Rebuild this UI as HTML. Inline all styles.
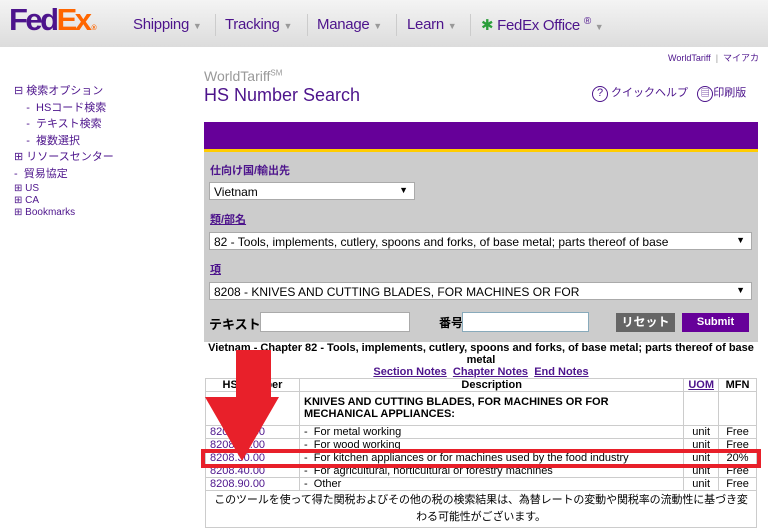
<!DOCTYPE html><html><head><meta charset="utf-8"><style>
*{margin:0;padding:0;box-sizing:border-box}
body{width:768px;height:532px;overflow:hidden;background:#fff;font-family:"Liberation Sans","Noto Sans CJK JP",sans-serif;position:relative;font-size:11px}
.a{position:absolute}
.nav{top:0;left:0;width:768px;height:47px;background:linear-gradient(#f4f4f4,#dcdcdc)}
.ni{top:16px;font-size:15px;color:#4d148c;letter-spacing:-0.3px}
.sep{top:14px;width:1px;height:22px;background:#ccc}
.car{color:#999;font-size:9px}
.lm{color:#4d148c;font-size:11px}
.sel{background:#fff;border:1px solid #aaa;height:18px;font-size:12px;padding:2px 4px;color:#000}
.sel:after{content:"▼";position:absolute;right:6px;top:2px;font-size:9px}
.lbl{color:#4d148c;font-weight:bold;font-size:11px}
table{border-collapse:collapse;font-size:11px}
td{border:1px solid #ccc;padding:0 4px;height:13px;line-height:12px}
.lk{color:#4d148c}
</style></head><body>
<div class="a nav"></div>
<div class="a" style="left:9px;top:2px;font-size:31px;font-weight:bold;letter-spacing:-2.5px;color:#4d148c">Fed<span style="color:#ff6600">Ex</span><span style="font-size:7px;color:#ff6600;letter-spacing:0"> ®</span></div>
<div class="a ni" style="left:133px">Shipping <span class="car">▼</span></div>
<div class="a sep" style="left:215px"></div>
<div class="a ni" style="left:225px">Tracking <span class="car">▼</span></div>
<div class="a sep" style="left:307px"></div>
<div class="a ni" style="left:317px">Manage <span class="car">▼</span></div>
<div class="a sep" style="left:396px"></div>
<div class="a ni" style="left:407px">Learn <span class="car">▼</span></div>
<div class="a sep" style="left:470px"></div>
<div class="a ni" style="left:481px"><span style="color:#2a9d3a">✱</span> FedEx Office <sup style="font-size:10px">®</sup> <span class="car">▼</span></div>
<div class="a" style="left:668px;top:51px;font-size:9px;color:#4d148c">WorldTariff &nbsp;<span style="color:#999">|</span>&nbsp; マイアカ</div>
<div class="a" style="left:204px;top:68px;font-size:14px;color:#999">WorldTariff<sup style="font-size:8px">SM</sup></div>
<div class="a" style="left:204px;top:85px;font-size:18px;color:#4d148c">HS Number Search</div>
<div class="a" style="left:592px;top:84px;color:#4d148c;font-size:11px"><span style="display:inline-block;width:16px;height:16px;border:1.5px solid #4d148c;border-radius:50%;text-align:center;font-size:11px;line-height:13px">?</span> クイックヘルプ &nbsp; <span style="display:inline-block;width:16px;height:16px;border:1.5px solid #4d148c;border-radius:50%;text-align:center;font-size:9px;line-height:13px">▤</span>印刷版</div>
<div class="a lm" style="left:14px;top:83px;line-height:16.5px">⊟ 検索オプション<br>&nbsp;&nbsp;&nbsp;&nbsp;- &nbsp;HSコード検索<br>&nbsp;&nbsp;&nbsp;&nbsp;- &nbsp;テキスト検索<br>&nbsp;&nbsp;&nbsp;&nbsp;- &nbsp;複数選択<br>⊞ リソースセンター<br>- &nbsp;貿易協定</div>
<div class="a lm" style="left:14px;top:183px;line-height:12px;font-size:10px">⊞ US<br>⊞ CA<br>⊞ Bookmarks</div>
<div class="a" style="left:204px;top:122px;width:554px;height:27px;background:#660099"></div>
<div class="a" style="left:204px;top:149px;width:554px;height:3px;background:#ffcc00"></div>
<div class="a" style="left:204px;top:152px;width:554px;height:190px;background:#cccccc"></div>
<div class="a lbl" style="left:210px;top:162px">仕向け国/輸出先</div>
<div class="a sel" style="left:209px;top:182px;width:206px">Vietnam</div>
<div class="a lbl" style="left:210px;top:211px;text-decoration:underline">類/部名</div>
<div class="a sel" style="left:209px;top:232px;width:543px">82 - Tools, implements, cutlery, spoons and forks, of base metal; parts thereof of base</div>
<div class="a lbl" style="left:210px;top:261px;text-decoration:underline">項</div>
<div class="a sel" style="left:209px;top:282px;width:543px">8208 - KNIVES AND CUTTING BLADES, FOR MACHINES OR FOR</div>
<div class="a" style="left:209px;top:314px;font-weight:bold;font-size:13px">テキスト</div>
<div class="a" style="left:260px;top:312px;width:150px;height:20px;background:#fff;border:1px solid #aaa"></div>
<div class="a" style="left:439px;top:314px;font-weight:bold;font-size:12px">番号</div>
<div class="a" style="left:462px;top:312px;width:127px;height:20px;background:#fff;border:1px solid #8ab"></div>
<div class="a" style="left:616px;top:313px;width:59px;height:19px;background:#666;color:#fff;font-weight:bold;font-size:12px;text-align:center;line-height:19px">リセット</div>
<div class="a" style="left:682px;top:313px;width:67px;height:19px;background:#660099;color:#fff;font-weight:bold;font-size:11px;text-align:center;line-height:19px">Submit</div>
<div class="a" style="left:205px;top:342px;width:552px;text-align:center;font-weight:bold;line-height:12px">Vietnam - Chapter 82 - Tools, implements, cutlery, spoons and forks, of base metal; parts thereof of base metal<br><span class="lk" style="text-decoration:underline">Section Notes</span>&nbsp; <span class="lk" style="text-decoration:underline">Chapter Notes</span>&nbsp; <span class="lk" style="text-decoration:underline">End Notes</span></div>
<table class="a" style="left:205px;top:378px;width:552px">
<tr style="font-weight:bold;text-align:center"><td style="width:94px">HS Number</td><td>Description</td><td style="width:29px" class="lk"><u>UOM</u></td><td style="width:38px">MFN</td></tr>
<tr><td style="height:34px"></td><td style="font-weight:bold;padding-top:4px;vertical-align:top">KNIVES AND CUTTING BLADES, FOR MACHINES OR FOR MECHANICAL APPLIANCES:</td><td></td><td></td></tr>
<tr><td class="lk">8208.10.00</td><td>- &nbsp;For metal working</td><td style="text-align:center">unit</td><td style="text-align:center">Free</td></tr>
<tr><td class="lk">8208.20.00</td><td>- &nbsp;For wood working</td><td style="text-align:center">unit</td><td style="text-align:center">Free</td></tr>
<tr><td class="lk">8208.30.00</td><td>- &nbsp;For kitchen appliances or for machines used by the food industry</td><td style="text-align:center">unit</td><td style="text-align:center">20%</td></tr>
<tr><td class="lk">8208.40.00</td><td>- &nbsp;For agricultural, horticultural or forestry machines</td><td style="text-align:center">unit</td><td style="text-align:center">Free</td></tr>
<tr><td class="lk">8208.90.00</td><td>- &nbsp;Other</td><td style="text-align:center">unit</td><td style="text-align:center">Free</td></tr>
<tr><td colspan="4" style="height:37px;text-align:center;font-size:11px;line-height:17px;letter-spacing:-0.1px">このツールを使って得た関税およびその他の税の検索結果は、為替レートの変動や関税率の流動性に基づき変わる可能性がございます。</td></tr>
</table>
<div class="a" style="left:201px;top:449px;width:560px;height:19px;border:4px solid #e8202a"></div>
<svg class="a" style="left:204px;top:350px" width="76" height="112"><polygon points="32,0 67,0 67,47 75,47 38,111 1,47 32,47" fill="#e8202a"/></svg>
</body></html>
